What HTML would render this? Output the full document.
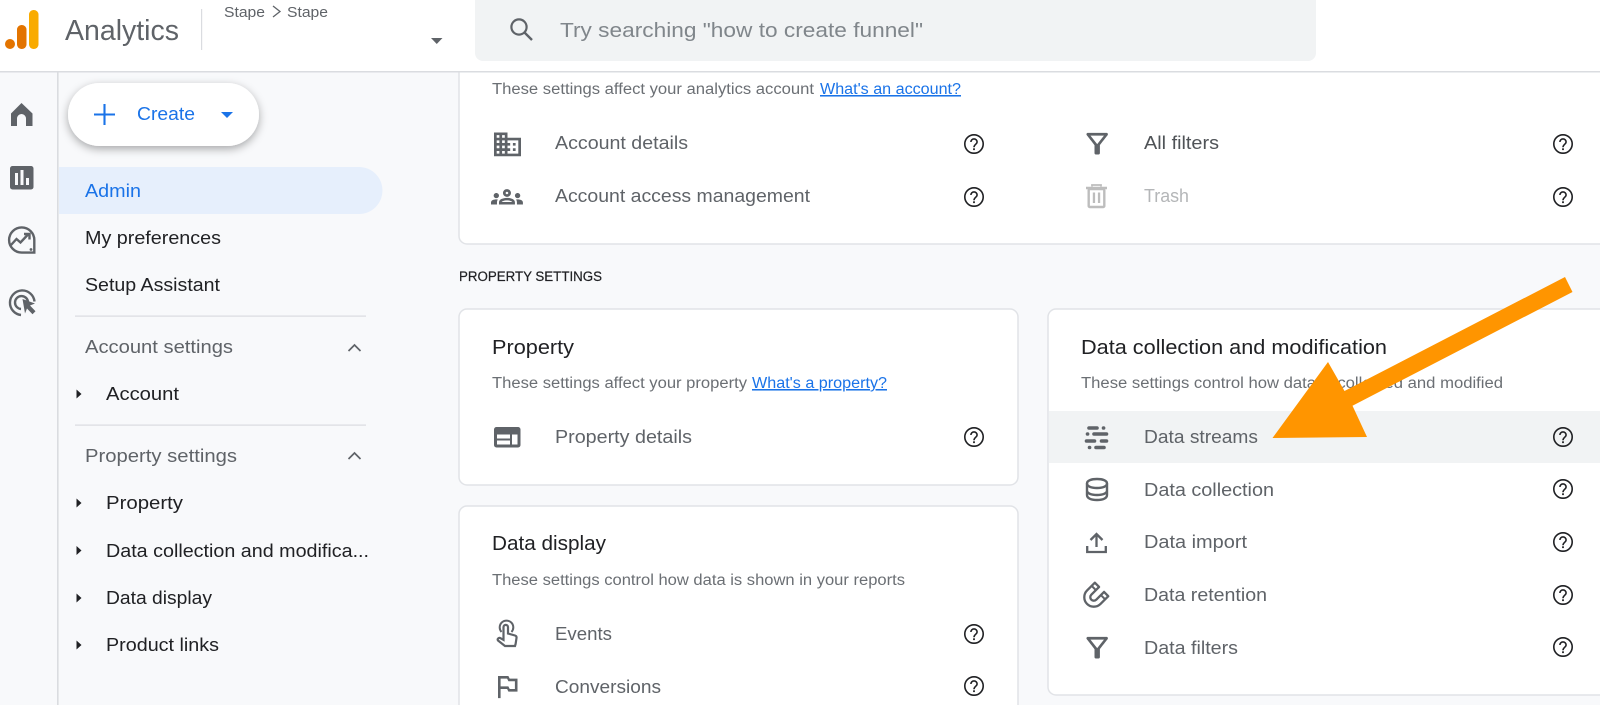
<!DOCTYPE html>
<html lang="en"><head><meta charset="utf-8"><title>Analytics Admin</title>
<style>
html,body{margin:0;padding:0;width:1600px;height:705px;overflow:hidden;background:#f8f9fb}
svg{display:block;position:absolute;left:0;top:0}
text{font-family:"Liberation Sans",sans-serif;white-space:pre}
.m{font-size:18.5px;fill:#202124}
.g{font-size:18.5px;fill:#5f6368}
.i{font-size:18.5px;fill:#5f6368}
.h{font-size:20.5px;fill:#202124}
.s{font-size:15.5px;fill:#6b6f74}
.l{font-size:15.5px;fill:#1a73e8;text-decoration:underline}
.card{fill:#fff;stroke:#e1e3e7;stroke-width:1.5}
</style></head><body>
<svg width="1600" height="705" viewBox="0 0 1600 705" xmlns="http://www.w3.org/2000/svg">
<defs>
<symbol id="help" viewBox="0 0 24 24"><circle cx="12" cy="12" r="9.200" fill="none" stroke="#202124" stroke-width="1.600"/><path d="M8.900 10a3.100 3.100 0 0 1 6.200 0c0 2.300-3.100 2.400-3.100 5.200" fill="none" stroke="#202124" stroke-width="1.600"/><rect x="11.100" y="16.300" width="1.800" height="1.800" fill="#202124"/></symbol>
<path id="filter" fill="#5f6368" d="M7 6h10l-5.010 6.300L7 6zm-2.750-.39C6.270 8.200 10 13 10 13v6c0 .55.45 1 1 1h2c.55 0 1-.45 1-1v-6s3.720-4.800 5.740-7.390c.51-.66.04-1.610-.79-1.610H5.040c-.83 0-1.300.95-.79 1.610z"/>
<filter id="sh" x="-20%" y="-40%" width="140%" height="190%"><feDropShadow dx="0" dy="3" stdDeviation="4.500" flood-color="#000" flood-opacity=".33"/></filter>
</defs>

<!-- backgrounds -->
<rect width="1600" height="705" fill="#f8f9fb"/>
<rect x="0" y="0" width="1600" height="71" fill="#fff"/>
<rect x="57" y="72" width="1.600" height="633" fill="#dadce0"/>

<!-- logo -->
<circle cx="10" cy="44" r="5" fill="#e37400"/>
<rect x="17" y="25" width="9.500" height="24" rx="4.500" fill="#e37400"/>
<rect x="29" y="10" width="9.500" height="39" rx="4.500" fill="#f9ab00"/>
<text x="65" y="40" font-size="29" fill="#5f6368" textLength="114" lengthAdjust="spacingAndGlyphs">Analytics</text>
<rect x="201" y="9" width="1.200" height="41" fill="#dadce0"/>
<text x="224" y="17" font-size="15" fill="#5f6368" textLength="41" lengthAdjust="spacingAndGlyphs">Stape</text>
<path d="M273 6l7 5.500-7 5.500" fill="none" stroke="#5f6368" stroke-width="1.300"/>
<text x="287" y="17" font-size="15" fill="#5f6368" textLength="41" lengthAdjust="spacingAndGlyphs">Stape</text>
<path d="M431 38h11.500l-5.750 6z" fill="#5f6368"/>

<!-- search -->
<path d="M475 0H1316V53a8 8 0 0 1-8 8H483a8 8 0 0 1-8-8z" fill="#f1f3f4"/>
<circle cx="519" cy="27" r="7.600" fill="none" stroke="#5f6368" stroke-width="2.200"/>
<path d="M524.500 32.500L532 40" stroke="#5f6368" stroke-width="2.400" fill="none"/>
<text x="560" y="37" font-size="20.500" fill="#80868b" textLength="363" lengthAdjust="spacingAndGlyphs">Try searching "how to create funnel"</text>

<!-- rail icons -->
<path fill="#5f6368" d="M21.500 103 32.500 113.500V126H26v-7.500a4.500 4.500 0 0 0-9 0V126H11V113.500z"/>
<rect x="10" y="166" width="23.500" height="23.500" rx="2.500" fill="#5f6368"/>
<rect x="15" y="173" width="3" height="12" fill="#f8f9fb"/><rect x="20.500" y="170" width="3" height="15" fill="#f8f9fb"/><rect x="26" y="178" width="3" height="7" fill="#f8f9fb"/>
<path d="M34.300 240a12.600 12.600 0 1 0-12.600 12.600H34.300z" fill="none" stroke="#5f6368" stroke-width="2.400"/>
<path d="M11 245l5.500-6 4 3.500 7.500-8M24 234h5.500v5.500" fill="none" stroke="#5f6368" stroke-width="2.400"/>
<circle cx="31" cy="249.500" r="1.400" fill="#5f6368"/>
<path d="M21 315a12.300 12.300 0 1 1 13.500-13.500" fill="none" stroke="#5f6368" stroke-width="2.400"/>
<path d="M21 309a6.500 6.500 0 1 1 7-7" fill="none" stroke="#5f6368" stroke-width="2.400"/>
<path d="M22.500 299l12.500 4.500-5 2 5.500 5.700-3 3-5.500-5.700-2 5z" fill="#5f6368"/>

<!-- create -->
<rect x="68" y="83" width="191" height="63" rx="31.500" fill="#fff" filter="url(#sh)"/>
<path d="M94 114.500h21M104.500 104v21" stroke="#1a73e8" stroke-width="2.100" fill="none"/>
<text x="137" y="120" font-size="18.500" fill="#1a73e8" textLength="58" lengthAdjust="spacingAndGlyphs">Create</text>
<path d="M221 112h12l-6 6z" fill="#1a73e8"/>

<!-- side nav -->
<path d="M59 167H359a23.500 23.500 0 0 1 0 47H59z" fill="#e6effc"/>
<text class="m" x="85" y="197" style="fill:#1a73e8" textLength="56" lengthAdjust="spacingAndGlyphs">Admin</text>
<text class="m" x="85" y="244" textLength="136" lengthAdjust="spacingAndGlyphs">My preferences</text>
<text class="m" x="85" y="291" textLength="135" lengthAdjust="spacingAndGlyphs">Setup Assistant</text>
<rect x="75" y="315.500" width="291" height="1.200" fill="#dadce0"/>
<text class="g" x="85" y="353" textLength="148" lengthAdjust="spacingAndGlyphs">Account settings</text>
<path d="M348.500 351l6-6 6 6" fill="none" stroke="#5f6368" stroke-width="1.700"/>
<path d="M76.500 389.500l5 4.500-5 4.500z" fill="#202124"/>
<text class="m" x="106" y="400" textLength="73" lengthAdjust="spacingAndGlyphs">Account</text>
<rect x="75" y="424.500" width="291" height="1.200" fill="#dadce0"/>
<text class="g" x="85" y="462" textLength="152" lengthAdjust="spacingAndGlyphs">Property settings</text>
<path d="M348.500 459l6-6 6 6" fill="none" stroke="#5f6368" stroke-width="1.700"/>
<path d="M76.500 498.500l5 4.500-5 4.500z" fill="#202124"/>
<text class="m" x="106" y="509" textLength="77" lengthAdjust="spacingAndGlyphs">Property</text>
<path d="M76.500 546l5 4.500-5 4.500z" fill="#202124"/>
<text class="m" x="106" y="557" textLength="263" lengthAdjust="spacingAndGlyphs">Data collection and modifica...</text>
<path d="M76.500 593.500l5 4.500-5 4.500z" fill="#202124"/>
<text class="m" x="106" y="604" textLength="106" lengthAdjust="spacingAndGlyphs">Data display</text>
<path d="M76.500 640.500l5 4.500-5 4.500z" fill="#202124"/>
<text class="m" x="106" y="651" textLength="113" lengthAdjust="spacingAndGlyphs">Product links</text>

<!-- account card -->
<path class="card" d="M459 72V236a8 8 0 0 0 8 8H1605V72"/>
<rect x="0" y="71" width="1600" height="1.500" fill="#dadce0"/>
<text class="s" x="492" y="94" textLength="322" lengthAdjust="spacingAndGlyphs">These settings affect your analytics account</text>
<text class="l" x="820" y="94" textLength="141" lengthAdjust="spacingAndGlyphs">What's an account?</text>

<path fill="#5f6368" transform="translate(491.300 128.500) scale(1.350 1.320)" d="M12 7V3H2v18h20V7H12zM6 19H4v-2h2v2zm0-4H4v-2h2v2zm0-4H4V9h2v2zm0-4H4V5h2v2zm4 12H8v-2h2v2zm0-4H8v-2h2v2zm0-4H8V9h2v2zm0-4H8V5h2v2zm10 12h-8v-2h2v-2h-2v-2h2v-2h-2V9h8v10zm-2-8h-2v2h2v-2zm0 4h-2v2h2v-2z"/>
<text class="i" x="555" y="149" textLength="133" lengthAdjust="spacingAndGlyphs">Account details</text>
<use href="#help" x="962" y="132" width="24" height="24"/>
<path fill="#5f6368" transform="translate(491 181.500) scale(1.330 1.280)" d="M4 13c1.100 0 2-.9 2-2 0-1.100-.9-2-2-2s-2 .9-2 2c0 1.100.9 2 2 2zm1.130 1.100C4.760 14.040 4.390 14 4 14c-.99 0-1.930.21-2.780.58C.48 14.900 0 15.620 0 16.430V18h4.500v-1.610c0-.83.23-1.610.63-2.290zM20 13c1.100 0 2-.9 2-2 0-1.100-.9-2-2-2s-2 .9-2 2c0 1.100.9 2 2 2zm4 3.430c0-.81-.48-1.530-1.220-1.850C21.930 14.210 20.990 14 20 14c-.39 0-.76.04-1.130.1.4.68.63 1.460.63 2.290V18H24v-1.570zm-7.760-2.780C15.070 13.140 13.630 12.750 12 12.750c-1.630 0-3.070.39-4.240.9C6.680 14.130 6 15.210 6 16.390V18h12v-1.610c0-1.180-.68-2.260-1.760-2.740zM8.070 16c.09-.23.13-.39.91-.69.97-.38 1.990-.56 3.020-.56s2.050.18 3.020.56c.77.3.81.46.91.69H8.070zM12 8c.55 0 1 .45 1 1s-.45 1-1 1-1-.45-1-1 .45-1 1-1m0-2c-1.660 0-3 1.340-3 3s1.340 3 3 3 3-1.340 3-3-1.340-3-3-3z"/>
<text class="i" x="555" y="202" textLength="255" lengthAdjust="spacingAndGlyphs">Account access management</text>
<use href="#help" x="962" y="185" width="24" height="24"/>

<use href="#filter" transform="translate(1081 127.500) scale(1.350)"/>
<text class="i" x="1144" y="149" textLength="75" lengthAdjust="spacingAndGlyphs" style="fill:#4f5357">All filters</text>
<use href="#help" x="1551" y="132" width="24" height="24"/>
<path d="M1086 188h21" stroke="#bdbdbd" stroke-width="2.400" fill="none"/>
<path d="M1092 186.500V185h9v1.500" stroke="#bdbdbd" stroke-width="1.800" fill="none"/>
<rect x="1088.700" y="189" width="15.600" height="18" rx="1" fill="none" stroke="#bdbdbd" stroke-width="2.400"/>
<rect x="1092.800" y="192.500" width="2.300" height="10.500" fill="#bdbdbd"/><rect x="1097.900" y="192.500" width="2.300" height="10.500" fill="#bdbdbd"/>
<text class="i" x="1144" y="202" style="fill:#b4b6b8" textLength="45" lengthAdjust="spacingAndGlyphs">Trash</text>
<use href="#help" x="1551" y="185" width="24" height="24"/>

<text x="459" y="281" font-size="13.500" fill="#202124" stroke="#202124" stroke-width=".2" textLength="143" lengthAdjust="spacingAndGlyphs">PROPERTY SETTINGS</text>

<!-- property card -->
<rect class="card" x="459" y="309" width="559" height="176" rx="8"/>
<text class="h" x="492" y="354" textLength="82" lengthAdjust="spacingAndGlyphs">Property</text>
<text class="s" x="492" y="388" textLength="255" lengthAdjust="spacingAndGlyphs">These settings affect your property</text>
<text class="l" x="752" y="388" textLength="135" lengthAdjust="spacingAndGlyphs">What's a property?</text>
<rect x="494" y="427" width="26.500" height="20.500" rx="2.500" fill="#5f6368"/>
<rect x="497" y="434.500" width="13" height="4" fill="#fff"/><rect x="497" y="440.500" width="13" height="4" fill="#fff"/><rect x="512" y="434.500" width="5.500" height="10" fill="#fff"/>
<text class="i" x="555" y="443" textLength="137" lengthAdjust="spacingAndGlyphs">Property details</text>
<use href="#help" x="962" y="425" width="24" height="24"/>

<!-- data display card -->
<path class="card" d="M459 705V514a8 8 0 0 1 8-8H1010a8 8 0 0 1 8 8V705"/>
<text class="h" x="492" y="550" textLength="114" lengthAdjust="spacingAndGlyphs">Data display</text>
<text class="s" x="492" y="585" textLength="413" lengthAdjust="spacingAndGlyphs">These settings control how data is shown in your reports</text>
<path d="M501.500 632a6.800 6.800 0 1 1 10 0" fill="none" stroke="#5f6368" stroke-width="2"/>
<path d="M505 646l-7-5.500c-1-1.500.8-3.300 2.500-2.300l3 1.700V627c0-2.800 4.500-2.800 4.500 0v6.500l7 2c1.300.4 1.700 1.300 1.500 2.500l-.9 6-.6 2z" fill="none" stroke="#5f6368" stroke-width="2.200"/>
<text class="i" x="555" y="640" textLength="57" lengthAdjust="spacingAndGlyphs">Events</text>
<use href="#help" x="962" y="622" width="24" height="24"/>
<path fill="#5f6368" transform="translate(491.500 670.800) scale(1.300)" d="M14 6l-1-2H5v17h2v-7h5l1 2h7V6h-6zm4 8h-4l-1-2H7V6h5l1 2h5v6z"/>
<text class="i" x="555" y="693" textLength="106" lengthAdjust="spacingAndGlyphs">Conversions</text>
<use href="#help" x="962" y="674" width="24" height="24"/>

<!-- data collection card -->
<path class="card" d="M1605 309H1056a8 8 0 0 0-8 8V687a8 8 0 0 0 8 8H1605"/>
<text class="h" x="1081" y="354" textLength="306" lengthAdjust="spacingAndGlyphs">Data collection and modification</text>
<text class="s" x="1081" y="388" textLength="422" lengthAdjust="spacingAndGlyphs">These settings control how data is collected and modified</text>
<rect x="1048.800" y="411" width="551.200" height="52" fill="#f1f3f4"/>

<g stroke="#5f6368" stroke-width="3.600" stroke-linecap="round" fill="none">
<path d="M1089 428h8M1103.500 428h.1M1087.500 434h.1M1094 434h12.500M1086.500 441h8M1101.500 441h5M1089.500 447.500h.1M1096 447.500h8"/>
</g>
<text class="i" x="1144" y="443" textLength="114" lengthAdjust="spacingAndGlyphs">Data streams</text>
<use href="#help" x="1551" y="425" width="24" height="24"/>

<g fill="none" stroke="#5f6368" stroke-width="2.400">
<path d="M1087 483.500c0-3 4.500-4.500 10-4.500s10 1.500 10 4.500-4.500 4.500-10 4.500-10-1.500-10-4.500z"/>
<path d="M1087 483.500V495c0 3.500 4.500 5 10 5s10-1.500 10-5V483.500M1087 490.500c0 3 4.500 4.500 10 4.500s10-1.500 10-4.500"/>
</g>
<text class="i" x="1144" y="496" textLength="130" lengthAdjust="spacingAndGlyphs">Data collection</text>
<use href="#help" x="1551" y="477" width="24" height="24"/>

<g fill="none" stroke="#5f6368" stroke-width="2.300">
<path d="M1096.500 547V534.500M1090.500 540l6-6 6 6M1087.200 546v6h18.600v-6"/>
</g>
<text class="i" x="1144" y="548" textLength="103" lengthAdjust="spacingAndGlyphs">Data import</text>
<use href="#help" x="1551" y="530" width="24" height="24"/>

<g transform="translate(1094.500 596.500) rotate(45)" fill="none" stroke="#5f6368" stroke-width="2.300" stroke-linejoin="round">
<path d="M-9.500-10H-3.500V1A3.500 3.500 0 0 0 3.500 1V-10H9.500V1A9.500 9.500 0 0 1-9.500 1Z"/>
<path d="M-9.500-5.500H-3.500M3.500-5.500H9.500" stroke-width="2"/>
</g>
<text class="i" x="1144" y="601" textLength="123" lengthAdjust="spacingAndGlyphs">Data retention</text>
<use href="#help" x="1551" y="583" width="24" height="24"/>

<use href="#filter" transform="translate(1081 631.500) scale(1.350)"/>
<text class="i" x="1144" y="654" textLength="94" lengthAdjust="spacingAndGlyphs">Data filters</text>
<use href="#help" x="1551" y="635" width="24" height="24"/>

<!-- orange arrow -->
<polygon fill="#ff9500" points="1565,277 1344.500,391 1328,362 1272.500,438 1367,437 1352.500,405.700 1572.500,292"/>
</svg>
</body></html>
